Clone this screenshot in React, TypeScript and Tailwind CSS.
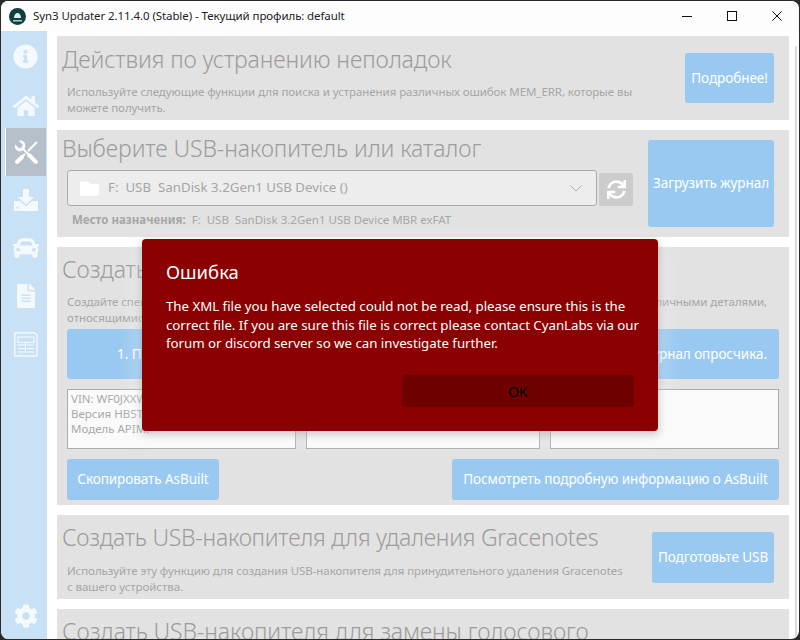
import React from "react";
import { FaInfoCircle, FaHome, FaCar, FaFileAlt, FaCog, FaSync, FaFolder } from "react-icons/fa";

const Btn = ({ className, children }: { className: string; children: React.ReactNode }) => (
  <div className={"flex items-center justify-center rounded-[3px] bg-[#99c9f0] text-[13.5px] tracking-[-0.06px] text-white " + className}>{children}</div>
);

const H = ({ children, className = "tracking-[-0.1px]" }: { children: React.ReactNode; className?: string }) => (
  <div className={"whitespace-nowrap text-[23px] leading-[32px] font-light text-[#9c9c9c] " + className}>{children}</div>
);

const Desc = ({ children, className = "" }: { children: React.ReactNode; className?: string }) => (
  <div className={"whitespace-nowrap text-[11.5px] leading-[16px] tracking-[-0.07px] text-[#a6a6a6] " + className}>{children}</div>
);

const Side = ({ children, active }: { children: React.ReactNode; active?: boolean }) => (
  <div className={"flex h-[48px] w-[41px] items-center justify-center text-[#f4f9fd] " + (active ? "border-l border-white bg-[#b5c0ca] text-white" : "")}>{children}</div>
);

const Box = ({ className, lines }: { className: string; lines?: string[] }) => (
  <div className={"h-[60px] border border-[#acacac] bg-[#fafafa] px-[3px] py-[1px] text-[11.5px] leading-[15px] text-[#a9a9a9] " + className}>
    {lines?.map((l) => <div key={l} className="whitespace-nowrap">{l}</div>)}
  </div>
);

const ToolsIcon = () => (
  <svg width="25" height="25" viewBox="0 0 24 24" fill="none" stroke="currentColor" strokeLinecap="round">
    <path d="M1 4.2 4.8 7.8 7.6 7.2 8.2 4.4 4.6.8C8.2-.2 11.6 2.6 10.8 6.6L10.4 8 8 10.4 6.6 10.8C3 11.4 0 8 1 4.2Z" fill="currentColor" stroke="none" />
    <path d="M9 9 14 14" strokeWidth="2" />
    <path d="M14.5 14.5 21 21" strokeWidth="4" />
    <path d="M21.5 2.5 14 10M10 14 7 17" strokeWidth="2" />
    <path d="M7.5 16.5 3 21" strokeWidth="4" />
  </svg>
);

const TrayIcon = () => (
  <svg width="24" height="24" viewBox="0 0 24 24" fill="currentColor">
    <path d="M9 1h6v8h5l-8 7.5L4 9h5z" />
    <path fillRule="evenodd" d="M0 13h6l6 5.5 6-5.5h6v10H0zM2.5 18.5v2h2v-2z" />
  </svg>
);

const PaperIcon = () => (
  <svg width="24" height="25" viewBox="0 0 24 25" fill="none" stroke="currentColor">
    <path d="M1.5.8H20L23 3v21H1.5a.8.8 0 0 1-.8-.8V1.5a.8.8 0 0 1 .8-.7Z" strokeWidth="1.4" />
    <path d="M4 5h16v5.5H4zM4 13h7M4 16.5h7M4 20h7M13 13h7M13 16.5h7M13 20h7" strokeWidth="1.2" />
    <path d="M11.5 11v10" strokeWidth="1" />
  </svg>
);

export default function App() {
  return (
    <div className="relative h-[640px] w-[800px] overflow-hidden bg-[#2a2a2a] font-['Noto_Sans','Open_Sans',sans-serif]">
      <div className="flex h-[639px] w-[799px] flex-col overflow-hidden rounded-[8px] border-t border-l border-[#2a2a2a] bg-white">
        {/* title bar */}
        <div className="flex h-[30px] shrink-0 items-center bg-[#fdfdfd] pl-[8px]">
          <svg width="17" height="17" viewBox="0 0 17 17" className="mt-[1px]">
            <circle cx="8.5" cy="8.5" r="8.5" fill="#12403f" />
            <path d="M5 10c0-3 1.5-5 3.5-5s3.5 2 3.5 5z" fill="#dfeeee" />
            <rect x="4" y="12" width="9" height="1.5" fill="#9fd0d0" />
          </svg>
          <span className="ml-[7px] whitespace-nowrap text-[11.5px] tracking-[-0.09px] text-[#222]">Syn3 Updater 2.11.4.0 (Stable) - Текущий профиль: default</span>
          <div className="ml-auto flex items-center gap-[35px] pr-[17px]">
            <svg width="10" height="10" viewBox="0 0 10 10"><path d="M0 5.5h10" stroke="#111" /></svg>
            <svg width="10" height="10" viewBox="0 0 10 10"><rect x=".5" y=".5" width="9" height="9" fill="none" stroke="#111" /></svg>
            <svg width="10" height="10" viewBox="0 0 10 10"><path d="M.3.3l9.4 9.4M9.7.3L.3 9.7" stroke="#111" /></svg>
          </div>
        </div>

        <div className="flex min-h-0 flex-1">
          {/* sidebar */}
          <div className="flex w-[46px] shrink-0 flex-col bg-[#c9e1f5] pl-[4px] pt-[1px]">
            <Side><FaInfoCircle size={25} /></Side>
            <Side><FaHome size={26} className="mt-[3px]" /></Side>
            <Side active><ToolsIcon /></Side>
            <Side><TrayIcon /></Side>
            <Side><FaCar size={26} /></Side>
            <Side><FaFileAlt size={24} /></Side>
            <Side><PaperIcon /></Side>
            <div className="mt-auto mb-[11px] flex w-[41px] justify-center text-[#f4f9fd]"><FaCog size={24} /></div>
          </div>

          {/* content */}
          <div className="flex min-w-0 flex-1 flex-col gap-[10px] overflow-hidden pl-[10px] pr-[6px] pt-[5px]">
            <div className="flex h-[84px] shrink-0 items-center justify-between bg-[#e2e2e2] pl-[5px] pr-[15px]">
              <div className="self-start pt-[7px]">
                <H>Действия по устранению неполадок</H>
                <Desc className="mt-[9px] pl-[5px]">Используйте следующие функции для поиска и устранения различных ошибок MEM_ERR, которые вы<br />можете получить.</Desc>
              </div>
              <Btn className="h-[50px] w-[89px]">Подробнее!</Btn>
            </div>

            <div className="flex h-[107px] shrink-0 justify-between bg-[#e2e2e2] pl-[5px] pr-[15px] pt-[2px]">
              <div>
                <H>Выберите USB-накопитель или каталог</H>
                <div className="mt-[6px] flex pl-[5px]">
                  <div className="flex h-[36px] w-[530px] items-center rounded-[3px] border border-[#ababab] bg-[#ededed] pl-[12px] pr-[14px] text-[13.3px] text-[#a6a6a6]">
                    <FaFolder size={19} className="text-white" />
                    <span className="ml-[9px] whitespace-pre">F:  USB  SanDisk 3.2Gen1 USB Device ()</span>
                    <svg width="12" height="7" viewBox="0 0 12 7" className="ml-auto"><path d="M.5.5L6 6 11.5.5" fill="none" stroke="#b0b0b0" /></svg>
                  </div>
                  <div className="ml-[2px] mt-[3px] flex h-[33px] w-[34px] items-center justify-center rounded-[2px] bg-[#cccccc] text-white"><FaSync size={19} /></div>
                </div>
                <div className="mt-[5px] whitespace-pre pl-[10px] text-[11.5px] text-[#a6a6a6]"><b>Место назначения:</b>  F:  USB  SanDisk 3.2Gen1 USB Device MBR exFAT</div>
              </div>
              <Btn className="mt-[8px] h-[87px] w-[126px]">Загрузить журнал</Btn>
            </div>

            <div className="h-[258px] shrink-0 bg-[#e2e2e2] px-[10px] pt-[6px]">
              <div className="-ml-[5px]"><H>Создать</H></div>
              <Desc className="mt-[9px]">
                <div className="flex justify-between pr-[12px]"><span>Создайте специальный файл</span><span>личными деталями,</span></div>
                <div>относящимися</div>
              </Desc>
              <div className="mt-[3px] flex gap-[10px]">
                <Btn className="h-[50px] flex-1"><span className="w-full pl-[50px]">1. Получить AsBuilt</span></Btn>
                <Btn className="h-[50px] flex-1"><span className="w-full pr-[12px] text-right">2. Загрузить журнал опросчика.</span></Btn>
              </div>
              <div className="mt-[10px] flex gap-[10px]">
                <Box className="w-[229px]" lines={["VIN: WF0JXXW", "Версия HB5T-1", "Модель APIM:"]} />
                <Box className="w-[234px]" />
                <Box className="w-[229px]" />
              </div>
              <div className="mt-[10px] flex justify-between">
                <Btn className="h-[41px] w-[152px]">Скопировать AsBuilt</Btn>
                <Btn className="h-[41px] w-[327px]">Посмотреть подробную информацию о AsBuilt</Btn>
              </div>
            </div>

            <div className="flex h-[84px] shrink-0 items-center justify-between bg-[#e2e2e2] pl-[5px] pr-[15px]">
              <div className="self-start pt-[6px]">
                <H className="tracking-[-0.25px]">Создать USB-накопителя для удаления Gracenotes</H>
                <Desc className="mt-[10px] pl-[5px]">Используйте эту функцию для создания USB-накопителя для принудительного удаления Gracenotes<br />с вашего устройства.</Desc>
              </div>
              <Btn className="h-[51px] w-[122px]">Подготовьте USB</Btn>
            </div>

            <div className="h-[60px] shrink-0 bg-[#e2e2e2] pl-[5px] pt-[6px]">
              <H>Создать USB-накопителя для замены голосового</H>
            </div>
          </div>

          <div className="mt-[15px] mr-[2px] w-[2px] shrink-0 bg-[#dcdcdc]" />
        </div>
      </div>

      {/* dialog */}
      <div className="absolute left-[142px] top-[239px] flex h-[192px] w-[516px] flex-col rounded-[4px] bg-[#8b0000] px-[24px] pt-[20px] shadow-[0_4px_24px_rgba(255,255,255,0.55),0_3px_8px_rgba(0,0,0,0.3)]">
        <div className="text-[18.5px] leading-[26px] text-white">Ошибка</div>
        <div className="mt-[12px] whitespace-nowrap text-[13.3px] leading-[18.5px] tracking-[-0.03px] text-white">
          The XML file you have selected could not be read, please ensure this is the<br />
          correct file. If you are sure this file is correct please contact CyanLabs via our<br />
          forum or discord server so we can investigate further.
        </div>
        <div className="mt-auto mb-[24px] flex h-[32px] w-[232px] items-center justify-center self-end rounded-[3px] bg-[#6f0000] text-[14px] text-black">OK</div>
      </div>
    </div>
  );
}
